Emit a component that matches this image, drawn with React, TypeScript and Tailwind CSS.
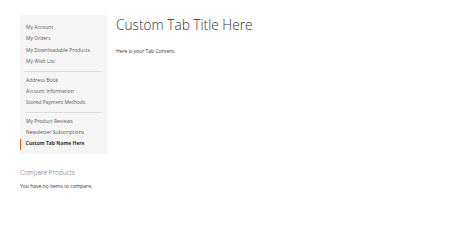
const groups = [
  ["My Account", "My Orders", "My Downloadable Products", "My Wish List"],
  ["Address Book", "Account Information", "Stored Payment Methods"],
  ["My Product Reviews", "Newsletter Subscriptions", "Custom Tab Name Here"],
];

const active = "Custom Tab Name Here";

export default function App() {
  return (
    <div className="w-[474px] h-[209px] bg-white text-[#333] font-['Open_Sans',sans-serif] overflow-hidden">
      <div className="flex pl-[20px] pt-[15px]">
        <div className="w-[87px] shrink-0">
          <div className="bg-[#f5f5f5] pt-[7px] pb-[4px]">
            {groups.map((items, gi) => (
              <div key={gi}>
                {gi > 0 && <div className="mx-[5px] my-[3px] h-px bg-[#dcdcdc]" />}
                {items.map((item) => (
                  <div
                    key={item}
                    className={
                      item === active
                        ? "h-[11.4px] flex items-center border-l-[1.5px] border-[#ff5501] pl-[4.5px] text-[5px] font-bold text-[#333] whitespace-nowrap"
                        : "h-[11.4px] flex items-center pl-[6px] text-[5px] text-[#575757] whitespace-nowrap"
                    }
                  >
                    {item}
                  </div>
                ))}
              </div>
            ))}
          </div>
          <div className="mt-[15px] text-[6.5px] font-light text-[#575757] leading-[8px]">Compare Products</div>
          <div className="mt-[6px] text-[5px] text-[#333] leading-[6px] whitespace-nowrap">You have no items to compare.</div>
        </div>
        <div className="ml-[9px]">
          <h1 className="text-[13.7px] font-light leading-[18px] text-[#333] whitespace-nowrap mt-[1px]">Custom Tab Title Here</h1>
          <p className="mt-[14px] text-[5px] leading-[6px] whitespace-nowrap">Here is your Tab Content.</p>
        </div>
      </div>
    </div>
  );
}
